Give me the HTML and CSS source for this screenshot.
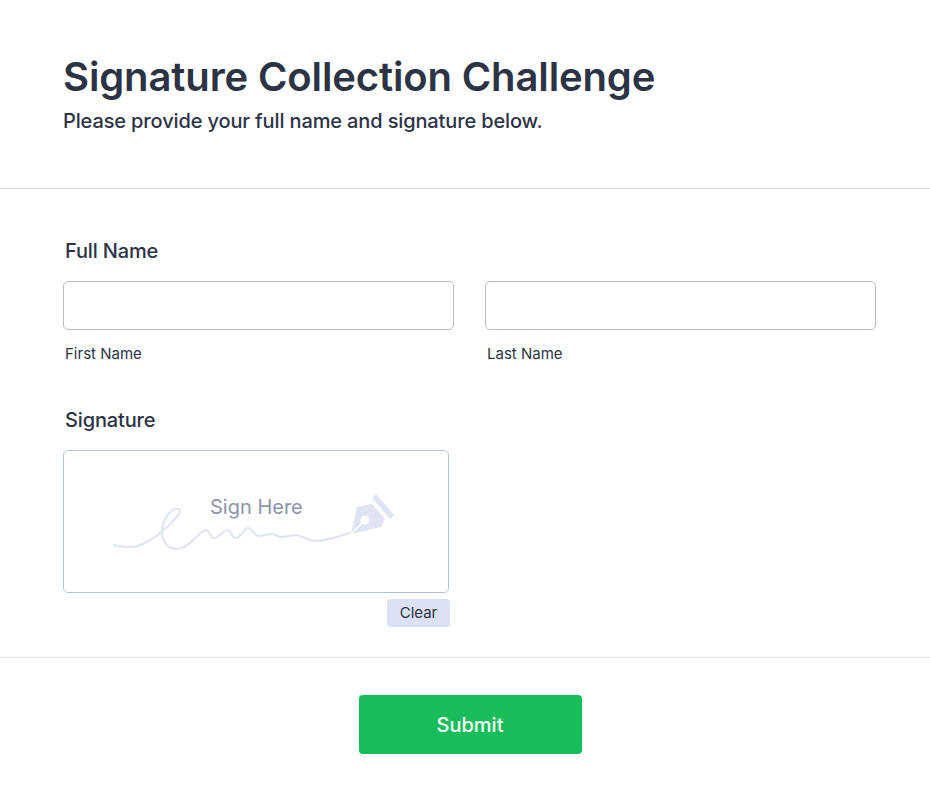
FILE: index.html
```html
<!DOCTYPE html>
<html lang="en">
<head>
  <meta charset="UTF-8" />
  <meta name="viewport" content="width=device-width, initial-scale=1.0"/>
  <title>Signature Collection Challenge</title>
  <link rel="stylesheet" href="styles.css">
</head>
<body>
  <header class="form-header">
    <h1>Signature Collection Challenge</h1>
    <p>Please provide your full name and signature below.</p>
  </header>

  <main class="form-body">
    <div class="field">
      <label class="field-label" for="first-name">Full Name</label>
      <div class="name-row">
        <div class="name-col">
          <input type="text" id="first-name" />
          <label class="sub-label" for="first-name">First Name</label>
        </div>
        <div class="name-col">
          <input type="text" id="last-name" />
          <label class="sub-label" for="last-name">Last Name</label>
        </div>
      </div>
    </div>

    <div class="field signature-field">
      <div class="field-label">Signature</div>
      <div class="signature-wrap">
        <div class="signature-pad">
          <svg class="signature-art" viewBox="0 0 386 143" aria-hidden="true">
            <path class="scribble" d="M51 95 C58 97 63 97 69 97 C76 97 82 93 87 90 C98 84 110 72 116 64 C118 60 116 58 112 59 C105 62 99 72 99 82 C99 92 105 99 114 99 C125 99 134 84 142 80 C146 79 146 87 151 88 C157 88 160 80 165 80 C168 80 168 88 173 88 C178 88 181 78 185 78 C189 78 191 86 196 86 C201 86 205 84 209 84 C213 84 214 87 218 87 C223 87 229 85 234 85 C240 86 245 91 252 91 C264 91 276 86 287 83"/>
            <path class="nib" d="M294 57 L309 54 L322 69 L318 77 L288 84 Z"/>
            <circle class="nib-hole" cx="302" cy="70" r="4.5"/>
            <path class="nib-slit" d="M302 70 L288 84"/>
            <path class="nib" d="M309 48 L313 44 L331 65 L327 69 Z"/>
          </svg>
          <span class="sign-here">Sign Here</span>
        </div>
        <button type="button" class="clear-button">Clear</button>
      </div>
    </div>
  </main>

  <footer class="form-footer">
    <button type="submit" class="submit-button">Submit</button>
  </footer>
</body>
</html>
```

FILE: styles.css
```css
* { margin: 0; padding: 0; box-sizing: border-box; }

html, body {
  height: 100%;
  font-family: Inter, Arial, sans-serif;
  background: #fff;
  color: #2c3345;
}

.form-header {
  height: 189px;
  padding: 53px 63px 0;
  border-bottom: 1px solid #d8dae9;
}

.form-header h1 {
  font-size: 40px;
  font-weight: 600;
  line-height: 48px;
  letter-spacing: -0.13px;
}

.form-header p {
  margin-top: 8px;
  font-size: 20px;
  font-weight: 500;
  line-height: 24px;
  letter-spacing: -0.13px;
}

.form-body {
  height: 469px;
  padding: 49px 54px 0 63px;
  border-bottom: 1px solid #e6e6ee;
}

.field-label {
  display: block;
  margin-left: 2px;
  font-size: 20px;
  font-weight: 500;
  line-height: 26px;
  letter-spacing: -0.15px;
}

.name-row {
  display: flex;
  gap: 31px;
  margin-top: 17px;
}

.name-col {
  flex: 1;
}

.name-col input {
  display: block;
  width: 100%;
  height: 49px;
  border: 1px solid #b8bdc9;
  border-radius: 5px;
  background: #fff;
}

.sub-label {
  display: block;
  margin: 15px 0 0 2px;
  font-size: 15px;
  line-height: 18px;
}

.signature-field {
  margin-top: 44px;
}

.signature-wrap {
  width: 387px;
  margin-top: 17px;
}

.signature-pad {
  position: relative;
  width: 386px;
  height: 143px;
  border: 1px solid #aec3e3;
  border-radius: 5px;
}

.signature-art {
  position: absolute;
  left: -1px;
  top: -1px;
  width: 386px;
  height: 143px;
}

.scribble {
  fill: none;
  stroke: #e1e4f2;
  stroke-width: 2.2;
  stroke-linecap: round;
}

.nib {
  fill: #e0e3f2;
}

.nib-hole {
  fill: #fff;
}

.nib-slit {
  stroke: #fff;
  stroke-width: 1.5;
}

.sign-here {
  position: absolute;
  left: 146px;
  top: 44px;
  font-size: 20px;
  line-height: 24px;
  color: #8d95ab;
}

.clear-button {
  display: block;
  width: 63px;
  height: 28px;
  margin: 6px 0 0 auto;
  padding-bottom: 2px;
  border: none;
  border-radius: 4px;
  background: #dce1f3;
  color: #2c3345;
  font-family: inherit;
  font-size: 15px;
}

.form-footer {
  display: flex;
  justify-content: center;
  padding: 37px 0 0 10px;
}

.submit-button {
  width: 223px;
  height: 59px;
  border: none;
  border-radius: 4px;
  background: #18bd5b;
  color: #fff;
  font-family: inherit;
  font-size: 20px;
  font-weight: 500;
}
```
